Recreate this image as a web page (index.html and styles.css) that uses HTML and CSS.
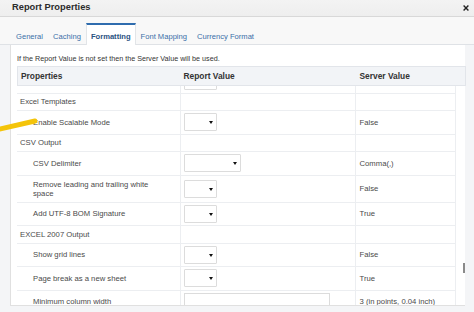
FILE: index.html
```html
<!DOCTYPE html>
<html>
<head>
<meta charset="utf-8">
<link rel="stylesheet" href="styles.css">
</head>
<body>
<div class="dialog">
  <div class="titlebar">
    <span class="title">Report Properties</span>
    <svg class="close" width="6" height="6" viewBox="0 0 6 6"><path d="M0.6 0.6L5.4 5.4M5.4 0.6L0.6 5.4" stroke="#222" stroke-width="1.4"/></svg>
  </div>
  <div class="tabs">
    <span class="tab">General</span>
    <span class="tab">Caching</span>
    <span class="tab active">Formatting</span>
    <span class="tab">Font Mapping</span>
    <span class="tab">Currency Format</span>
  </div>
  <div class="panel">
    <p class="info">If the Report Value is not set then the Server Value will be used.</p>
    <table class="head">
      <colgroup><col class="c1"><col class="c2"><col class="c3h"></colgroup>
      <tr><th>Properties</th><th>Report Value</th><th>Server Value</th></tr>
    </table>
    <div class="body">
      <div class="scroller">
        <table class="rows">
          <colgroup><col class="c1"><col class="c2"><col class="c3"></colgroup>
          <tr class="item"><td class="lbl"></td><td><span class="sel"></span></td><td class="sv"></td></tr>
          <tr class="group"><td class="grp">Excel Templates</td><td></td><td></td></tr>
          <tr class="item"><td class="lbl">Enable Scalable Mode</td><td><span class="sel"></span></td><td class="sv">False</td></tr>
          <tr class="group"><td class="grp">CSV Output</td><td></td><td></td></tr>
          <tr class="item"><td class="lbl">CSV Delimiter</td><td><span class="sel wide"></span></td><td class="sv">Comma(,)</td></tr>
          <tr class="item two"><td class="lbl">Remove leading and trailing white space</td><td><span class="sel"></span></td><td class="sv">False</td></tr>
          <tr class="item"><td class="lbl">Add UTF-8 BOM Signature</td><td><span class="sel"></span></td><td class="sv">True</td></tr>
          <tr class="group"><td class="grp">EXCEL 2007 Output</td><td></td><td></td></tr>
          <tr class="item"><td class="lbl">Show grid lines</td><td><span class="sel"></span></td><td class="sv">False</td></tr>
          <tr class="item"><td class="lbl">Page break as a new sheet</td><td><span class="sel"></span></td><td class="sv">True</td></tr>
          <tr class="item"><td class="lbl">Minimum column width</td><td><span class="inp"></span></td><td class="sv">3 (in points, 0.04 inch)</td></tr>
        </table>
      </div>
      <span class="thumb"></span>
    </div>
  </div>
  <svg class="marker" width="40" height="20" viewBox="0 0 40 20"><path d="M-2 15.5 L35 7" stroke="#f4c40a" stroke-width="5" stroke-linecap="round" fill="none"/></svg>
</div>
</body>
</html>
```
FILE: styles.css
```css
* { box-sizing: border-box; }
html, body { margin: 0; padding: 0; }
body {
  width: 474px;
  height: 312px;
  overflow: hidden;
  background: #f4f5f7;
  font-family: "Liberation Sans", Arial, sans-serif;
  color: #444;
}
.dialog {
  position: relative;
  width: 474px;
  height: 312px;
}
.titlebar {
  height: 17px;
  background: linear-gradient(#f3f3f3, #eeeeee);
  border-bottom: 1px solid #d8d8d8;
  display: flex;
  align-items: center;
  justify-content: space-between;
  padding: 0 5px 0 12px;
}
.title {
  font-weight: bold;
  font-size: 9.3px;
  color: #2b2b2b;
  line-height: 10px;
  margin-top: -2px;
}
.close { display: block; }
.tabs {
  height: 28px;
  background: #f8f8f8;
  border-bottom: 1px solid #dfe2e6;
  display: flex;
  align-items: flex-end;
  padding-left: 11px;
}
.tab {
  height: 21px;
  padding: 7px 5px 0;
  border-top: 2px solid transparent;
  font-size: 7.6px;
  line-height: 9px;
  color: #3b6fa8;
  white-space: nowrap;
}
.tab.active {
  background: #fff;
  border-top-color: #2f6cae;
  border-left: 1px solid #e2e5e8;
  border-right: 1px solid #e2e5e8;
  padding: 7px 4px 0;
  height: 22px;
  margin-bottom: -1px;
  font-weight: bold;
  color: #2a5282;
}
.panel {
  margin-left: 10px;
  width: 455px;
  height: 261px;
  background: #fff;
  border-left: 1px solid #e0e0e0;
  border-bottom: 1px solid #e0e0e0;
  padding-left: 6px;
}
.info {
  margin: 0;
  padding-top: 9px;
  height: 21px;
  font-size: 7.2px;
  line-height: 9px;
  color: #333;
}
table {
  border-collapse: collapse;
  table-layout: fixed;
}
col.c1 { width: 163px; }
col.c2 { width: 175px; }
col.c3 { width: 100px; }
col.c3h { width: 110px; }
.head {
  width: 448px;
  height: 20px;
  background: #f2f4f7;
  border: 1px solid #e2e5ea;
}
.head th {
  text-align: left;
  font-size: 8.4px;
  font-weight: bold;
  color: #333;
  padding: 0 0 0 3px;
  height: 18px;
  line-height: 10px;
}
.head th:last-child { padding-left: 4px; }
.body {
  position: relative;
  width: 448px;
  height: 219px;
  overflow: hidden;
}
.scroller { margin-top: -16.5px; }
.rows {
  width: 438px;
  font-size: 7.7px;
  color: #4a4a4a;
}
.rows td {
  border-bottom: 1px solid #eceef1;
  border-right: 1px solid #eceef1;
  padding: 0 0 0 3px;
  line-height: 9px;
  vertical-align: middle;
  white-space: normal;
}
.rows td.sv { padding-left: 4px; }
.rows td.lbl { padding: 0 10px 0 16px; }
tr.group { height: 17.5px; }
tr.item { height: 23.5px; }
tr.two { height: 27px; }
.sel {
  display: block;
  position: relative;
  width: 33px;
  height: 18px;
  border: 1px solid #dcdcdc;
  border-radius: 1px;
  background: #fff;
}
.sel.wide { width: 57px; }
.sel::after {
  content: "";
  position: absolute;
  right: 3px;
  top: 7px;
  border-left: 2px solid transparent;
  border-right: 2px solid transparent;
  border-top: 3.5px solid #111;
}
.inp {
  display: block;
  width: 146px;
  height: 18px;
  border: 1px solid #dcdcdc;
  background: #fff;
}
.thumb {
  position: absolute;
  left: 446px;
  top: 177px;
  width: 1.5px;
  height: 10px;
  background: #8a8a8a;
}
.marker {
  position: absolute;
  left: 0;
  top: 114px;
}
```
